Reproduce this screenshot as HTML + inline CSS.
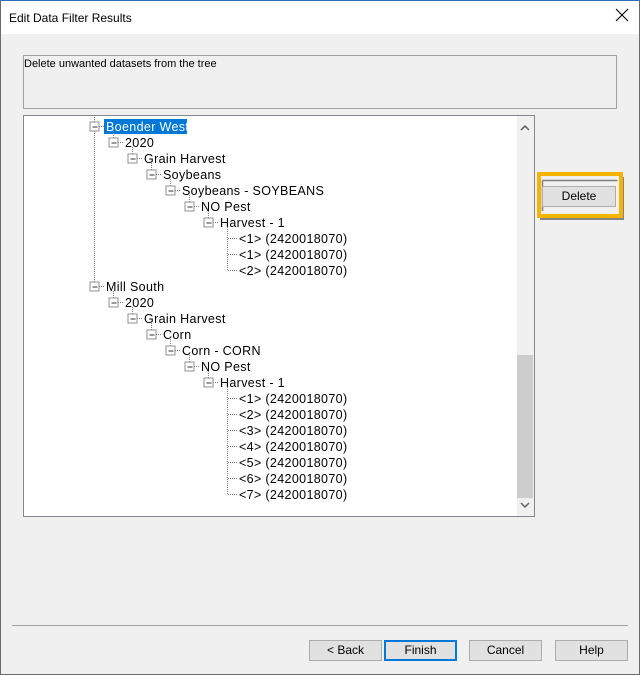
<!DOCTYPE html>
<html><head><meta charset="utf-8"><style>
*{margin:0;padding:0;box-sizing:border-box}
body{width:640px;height:675px;background:#f0f0f0;font-family:"Liberation Sans",Tahoma,sans-serif;font-size:12px;color:#000;position:relative;overflow:hidden}
.frame{position:absolute;left:0;top:0;width:640px;height:675px;border:1px solid #6b6b6b;border-top:1px solid #2b6fb5}
.title{position:absolute;left:1px;top:1px;width:638px;height:33px;background:#fff}
.title span{position:absolute;left:8px;top:10px;font-size:12px}
.x{position:absolute;right:10px;top:7px;width:14px;height:14px}
.info{position:absolute;left:23px;top:55px;width:594px;height:54px;border:1px solid #a0a0a0;background:#f0f0f0}
.info span{position:absolute;left:0;top:2px;font-size:11px}
.tree{position:absolute;left:23px;top:115px;width:512px;height:402px;border:1px solid #828790;background:#fff}
.btn{position:absolute;height:21px;border:1px solid #adadad;background:#e1e1e1;text-align:center;line-height:19px;font-size:12px}
.sep{position:absolute;left:12px;top:625px;width:616px;height:1px;background:#a0a0a0}
</style></head><body>
<div class="frame"></div>
<div class="title"><span>Edit Data Filter Results</span>
<svg class="x" viewBox="0 0 14 14"><path d="M1 1L13 13M13 1L1 13" stroke="#000" stroke-width="1.1"/></svg></div>
<div class="info"><span>Delete unwanted datasets from the tree</span></div>
<div class="tree"></div>
<svg style="position:absolute;left:0;top:0" width="640" height="675">
<defs><g id="b"><rect x="-4.5" y="-4.5" width="9" height="9" fill="#fff" stroke="#919191"/><path d="M-2 0.5H3" stroke="#333"/></g></defs>
<rect x="517" y="116" width="17" height="400" fill="#f0f0f0"/>
<rect x="517" y="355" width="16" height="143" fill="#cdcdcd"/>
<path d="M521 130l4-4 4 4M521 503l4 4 4-4" stroke="#606060" stroke-width="1.5" fill="none"/>
<rect x="104" y="119" width="83" height="15" fill="#0078d7"/>
<g stroke="#808080" stroke-dasharray="1 1" fill="none">
<path d="M94.5 117V286M113.5 131V142M132.5 147V158M151.5 163V174M170.5 179V190M189.5 195V206M208.5 211V222M227.5 227V270"/>
<path d="M113.5 291V302M132.5 307V318M151.5 323V334M170.5 339V350M189.5 355V366M208.5 371V382M227.5 387V494"/>
<path d="M99 126.5H104M118 142.5H123M137 158.5H142M156 174.5H161M175 190.5H180M194 206.5H199M213 222.5H218M228 238.5H237M228 254.5H237M228 270.5H237"/>
<path d="M99 286.5H104M118 302.5H123M137 318.5H142M156 334.5H161M175 350.5H180M194 366.5H199M213 382.5H218M228 398.5H237M228 414.5H237M228 430.5H237M228 446.5H237M228 462.5H237M228 478.5H237M228 494.5H237"/>
</g>
<use href="#b" x="94.5" y="126.5"/><use href="#b" x="113.5" y="142.5"/><use href="#b" x="132.5" y="158.5"/><use href="#b" x="151.5" y="174.5"/><use href="#b" x="170.5" y="190.5"/><use href="#b" x="189.5" y="206.5"/><use href="#b" x="208.5" y="222.5"/>
<use href="#b" x="94.5" y="286.5"/><use href="#b" x="113.5" y="302.5"/><use href="#b" x="132.5" y="318.5"/><use href="#b" x="151.5" y="334.5"/><use href="#b" x="170.5" y="350.5"/><use href="#b" x="189.5" y="366.5"/><use href="#b" x="208.5" y="382.5"/>
<g font-family="Liberation Sans, Tahoma, sans-serif" font-size="12.5" letter-spacing="0.35" fill="#000">
<text x="106" y="131" fill="#fff">Boender West</text>
<text x="125" y="147">2020</text>
<text x="144" y="163">Grain Harvest</text>
<text x="163" y="179">Soybeans</text>
<text x="182" y="195">Soybeans - SOYBEANS</text>
<text x="201" y="211">NO Pest</text>
<text x="220" y="227">Harvest - 1</text>
<text x="239" y="243">&lt;1&gt; (2420018070)</text>
<text x="239" y="259">&lt;1&gt; (2420018070)</text>
<text x="239" y="275">&lt;2&gt; (2420018070)</text>
<text x="106" y="291">Mill South</text>
<text x="125" y="307">2020</text>
<text x="144" y="323">Grain Harvest</text>
<text x="163" y="339">Corn</text>
<text x="182" y="355">Corn - CORN</text>
<text x="201" y="371">NO Pest</text>
<text x="220" y="387">Harvest - 1</text>
<text x="239" y="403">&lt;1&gt; (2420018070)</text>
<text x="239" y="419">&lt;2&gt; (2420018070)</text>
<text x="239" y="435">&lt;3&gt; (2420018070)</text>
<text x="239" y="451">&lt;4&gt; (2420018070)</text>
<text x="239" y="467">&lt;5&gt; (2420018070)</text>
<text x="239" y="483">&lt;6&gt; (2420018070)</text>
<text x="239" y="499">&lt;7&gt; (2420018070)</text>
</g>
<path d="M623 177V219H540" stroke="#555" stroke-width="2" fill="none" opacity="0.7"/>
<rect x="539" y="174" width="82" height="42" fill="none" stroke="#f5b400" stroke-width="4"/>
<path d="M542.5 180.5H617.5M542.5 180.5V211" stroke="#333" stroke-width="1.5" fill="none" opacity="0.6"/>
</svg>
<div class="btn" style="left:542px;top:186px;width:74px">Delete</div>
<div class="sep"></div>
<div class="btn" style="left:309px;top:640px;width:73px">&lt; Back</div>
<div class="btn" style="left:384px;top:640px;width:73px;border:2px solid #0078d7;line-height:17px">Finish</div>
<div class="btn" style="left:469px;top:640px;width:73px">Cancel</div>
<div class="btn" style="left:555px;top:640px;width:73px">Help</div>
</body></html>
